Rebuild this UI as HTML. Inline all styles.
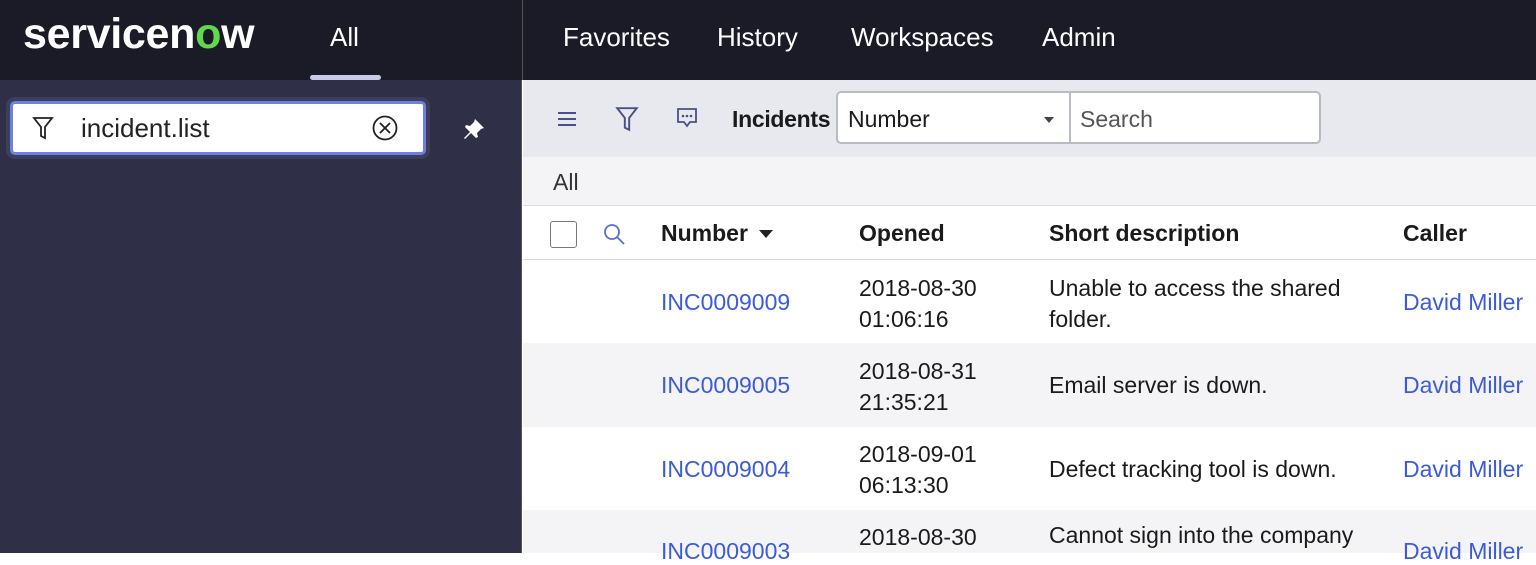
<!DOCTYPE html>
<html><head><style>
*{margin:0;padding:0;box-sizing:border-box}
body{width:1536px;height:553px;overflow:hidden;font-family:"Liberation Sans",sans-serif;background:#fff;position:relative}
.a{position:absolute}
.top{left:0;top:0;width:1536px;height:80px;background:#1a1b27}
.nav{color:#fff;font-size:26px;top:22px}
.side{left:0;top:80px;width:522px;height:473px;background:#2f3047;border-right:1px solid #555}
.t{font-size:23px;color:#1a1a1a}
.link{color:#3b5bdb;font-size:23px}
</style></head><body>
<div class="a top"></div>
<div class="a" style="left:522px;top:0;width:1px;height:80px;background:#555"></div>
<div class="a" style="left:23px;top:10px;color:#fff;font-size:43px;font-weight:bold;letter-spacing:-0.3px">servicen<span style="color:#62d84e">o</span>w</div>
<div class="a nav" style="left:330px">All</div>
<div class="a" style="left:310px;top:75px;width:71px;height:5px;background:#c9cbe6;border-radius:3px"></div>
<div class="a nav" style="left:563px">Favorites</div>
<div class="a nav" style="left:717px">History</div>
<div class="a nav" style="left:851px">Workspaces</div>
<div class="a nav" style="left:1042px">Admin</div>
<div class="a side"></div>
<div class="a" style="left:10px;top:101px;width:416px;height:54px;background:#fff;border:3px solid #6c80e0;border-radius:5px;box-shadow:0 0 0 4px #3c3e5c"></div>
<svg class="a" style="left:32px;top:116px" width="22" height="24" viewBox="0 0 22 24"><path d="M2 2H20L13 11V22L9 20V11Z" fill="none" stroke="#222" stroke-width="1.8"/></svg>
<div class="a" style="left:81px;top:113px;font-size:26px;color:#222">incident.list</div>
<svg class="a" style="left:372px;top:115px" width="26" height="26"><circle cx="13" cy="13" r="11.5" fill="none" stroke="#222" stroke-width="1.8"/><path d="M8 8L18 18M18 8L8 18" stroke="#222" stroke-width="1.8"/></svg>
<svg class="a" style="left:462px;top:117px" width="24" height="24" viewBox="0 0 24 24"><path d="M13 2L22 11L19 12L15 16L16 20L14 21L9 16L3 22L2 21L8 15L3 10L4 8L8 9L12 5Z" fill="#fff"/></svg>
<div class="a" style="left:523px;top:80px;width:1013px;height:77px;background:#e8e9ee"></div>
<div class="a" style="left:523px;top:157px;width:1013px;height:49px;background:#f4f4f6;border-bottom:1px solid #dcdce0"></div>
<svg class="a" style="left:556px;top:110px" width="22" height="18"><path d="M2 3H20M2 9H20M2 15H20" stroke="#4a4f8c" stroke-width="2"/></svg>
<svg class="a" style="left:615px;top:106px" width="24" height="26" viewBox="0 0 22 24"><path d="M2 2H20L13 11V22L9 20V11Z" fill="none" stroke="#4a4f8c" stroke-width="1.8"/></svg>
<svg class="a" style="left:676px;top:107px" width="22" height="22"><path d="M2 2H20V15H14L11 19L8 15H2Z" fill="none" stroke="#4a4f8c" stroke-width="1.8"/><circle cx="7" cy="9" r="1.3" fill="#4a4f8c"/><circle cx="11" cy="9" r="1.3" fill="#4a4f8c"/><circle cx="15" cy="9" r="1.3" fill="#4a4f8c"/></svg>
<div class="a t" style="left:732px;top:106px;font-weight:bold;letter-spacing:-0.3px">Incidents</div>
<div class="a" style="left:836px;top:91px;width:485px;height:53px;background:#fff;border:2px solid #b8bac4;border-radius:5px"></div>
<div class="a" style="left:1069px;top:92px;width:2px;height:51px;background:#b8bac4"></div>
<div class="a t" style="left:848px;top:106px">Number</div>
<div class="a" style="left:1044px;top:117px;border:5px solid transparent;border-top:6px solid #444;border-bottom:0"></div>
<div class="a" style="left:1080px;top:106px;font-size:23px;color:#555">Search</div>
<div class="a t" style="left:553px;top:169px;color:#333">All</div>
<div class="a" style="left:523px;top:206px;width:1013px;height:54px;border-bottom:1px solid #dcdce0"></div>
<div class="a" style="left:550px;top:221px;width:27px;height:27px;border:1.5px solid #777;border-radius:3px;background:#fff"></div>
<svg class="a" style="left:602px;top:222px" width="24" height="24"><circle cx="10" cy="10" r="7" fill="none" stroke="#5a6ed8" stroke-width="1.8"/><path d="M15 15L22 22" stroke="#5a6ed8" stroke-width="1.8"/></svg>
<div class="a t" style="left:661px;top:220px;font-weight:bold">Number</div>
<div class="a" style="left:759px;top:230px;border:7px solid transparent;border-top:8px solid #222;border-bottom:0"></div>
<div class="a t" style="left:859px;top:220px;font-weight:bold">Opened</div>
<div class="a t" style="left:1049px;top:220px;font-weight:bold">Short description</div>
<div class="a t" style="left:1403px;top:220px;font-weight:bold">Caller</div>
<div class="a" style="left:523px;top:343px;width:1013px;height:84px;background:#f4f4f6"></div>
<div class="a" style="left:523px;top:510px;width:1013px;height:43px;background:#f4f4f6"></div>
<div class="a link" style="left:661px;top:289px">INC0009009</div>
<div class="a t" style="left:859px;top:273px;line-height:31px">2018-08-30<br>01:06:16</div>
<div class="a t" style="left:1049px;top:273px;line-height:31px">Unable to access the shared<br>folder.</div>
<div class="a link" style="left:1403px;top:289px">David Miller</div>
<div class="a link" style="left:661px;top:372px">INC0009005</div>
<div class="a t" style="left:859px;top:356px;line-height:31px">2018-08-31<br>21:35:21</div>
<div class="a t" style="left:1049px;top:372px">Email server is down.</div>
<div class="a link" style="left:1403px;top:372px">David Miller</div>
<div class="a link" style="left:661px;top:456px">INC0009004</div>
<div class="a t" style="left:859px;top:439px;line-height:31px">2018-09-01<br>06:13:30</div>
<div class="a t" style="left:1049px;top:456px">Defect tracking tool is down.</div>
<div class="a link" style="left:1403px;top:456px">David Miller</div>
<div class="a link" style="left:661px;top:538px">INC0009003</div>
<div class="a t" style="left:859px;top:522px;line-height:31px">2018-08-30</div>
<div class="a t" style="left:1049px;top:522px">Cannot sign into the company</div>
<div class="a link" style="left:1403px;top:538px">David Miller</div>
</body></html>
